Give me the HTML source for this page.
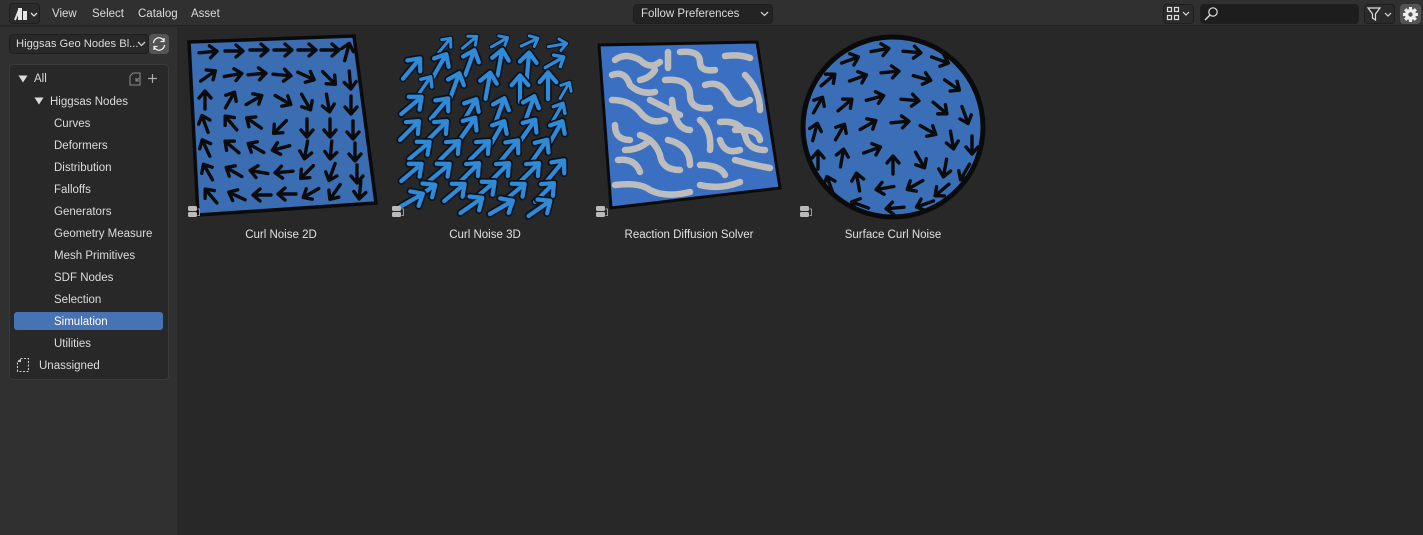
<!DOCTYPE html>
<html><head><meta charset="utf-8"><style>
*{margin:0;padding:0;box-sizing:border-box}
body{width:1423px;height:535px;background:#282828;font-family:"Liberation Sans","DejaVu Sans",sans-serif;font-size:11.5px;color:#d8d8d8;position:relative;overflow:hidden}
.hdr{position:absolute;left:0;top:0;width:1423px;height:26px;background:#303030;border-bottom:1px solid #232323}
.abs{position:absolute}
.btn{position:absolute;background:#282828;border:1px solid #1f1f1f;border-radius:4px}
.side{position:absolute;left:0;top:27px;width:177px;height:508px;background:#303030}
.panel{position:absolute;left:9px;top:64px;width:160px;height:316px;background:#282828;border:1px solid #3a3a3a;border-radius:4px}
.it{position:absolute;white-space:nowrap;color:#dcdcdc}
.sel{position:absolute;left:14px;top:312px;width:149px;height:18px;background:#4772b3;border-radius:3px}
.lbl{position:absolute;width:200px;text-align:center;color:#e0e0e0;top:229px}
</style></head><body>
<div class="hdr"></div>
<div class="btn" style="left:9px;top:3px;width:31px;height:21px;background:#2b2b2b"></div>
<svg class="abs" style="left:13px;top:6px" width="26" height="16"><path d="M2 14 L6 4 M6 14 V3 H8 V14 M11 14 V6 H13 V14" stroke="#e6e6e6" stroke-width="2" fill="none"/><path d="M18 7 l3 3 l3-3" stroke="#ddd" stroke-width="1.3" fill="none"/></svg>
<div class="it" style="left:52px;top:8px">View</div>
<div class="it" style="left:92px;top:8px">Select</div>
<div class="it" style="left:138px;top:8px">Catalog</div>
<div class="it" style="left:191px;top:8px">Asset</div>
<div class="btn" style="left:633px;top:4px;width:140px;height:20px;background:#232323"></div>
<div class="it" style="left:641px;top:8px">Follow Preferences</div>
<svg class="abs" style="left:760px;top:10px" width="10" height="8"><path d="M1 2 l3.5 3.5 l3.5-3.5" stroke="#ccc" stroke-width="1.3" fill="none"/></svg>
<div class="btn" style="left:1163px;top:4px;width:31px;height:20px;background:#2b2b2b"></div>
<svg class="abs" style="left:1166px;top:6px" width="28" height="16"><g fill="none" stroke="#ddd" stroke-width="1.2"><rect x="1.5" y="1.5" width="4" height="4"/><rect x="8.5" y="1.5" width="4" height="4"/><rect x="1.5" y="9.5" width="4" height="4"/><rect x="8.5" y="9.5" width="4" height="4"/><path d="M17 6 l3 3 l3-3"/></g></svg>
<div class="btn" style="left:1200px;top:4px;width:159px;height:20px;background:#1d1d1d"></div>
<svg class="abs" style="left:1203px;top:6px" width="18" height="16"><circle cx="10" cy="6" r="4.2" fill="none" stroke="#ddd" stroke-width="1.2"/><path d="M7 9 L2 14" stroke="#ddd" stroke-width="1.4"/></svg>
<div class="btn" style="left:1364px;top:4px;width:31px;height:20px;background:#2b2b2b"></div>
<svg class="abs" style="left:1366px;top:6px" width="28" height="16"><path d="M2 2 H14 L9.5 8 V14 L6.5 12 V8 Z" fill="none" stroke="#ddd" stroke-width="1.2"/><path d="M19 7 l3 3 l3-3" fill="none" stroke="#ddd" stroke-width="1.2"/></svg>
<div class="btn" style="left:1400px;top:4px;width:21px;height:20px;background:#545454;border-color:#545454"></div>
<svg class="abs" style="left:1402px;top:6px" width="17" height="17" viewBox="-8.5 -8.5 17 17"><g fill="#eee"><circle r="5.5"/><g id="t"><rect x="-1.6" y="-7.5" width="3.2" height="15"/></g><use href="#t" transform="rotate(45)"/><use href="#t" transform="rotate(90)"/><use href="#t" transform="rotate(135)"/></g><circle r="2.2" fill="#545454"/></svg>

<div class="side"></div>
<div class="btn" style="left:9px;top:34px;width:140px;height:20px;background:#282828"></div>
<div class="it" style="left:16px;top:38px;font-size:11.2px">Higgsas Geo Nodes Bl...</div>
<svg class="abs" style="left:137px;top:40px" width="10" height="8"><path d="M1 2 l3.5 3.5 l3.5-3.5" stroke="#ccc" stroke-width="1.3" fill="none"/></svg>
<div class="btn" style="left:149px;top:34px;width:20px;height:20px;background:#545454;border-color:#545454"></div>
<svg class="abs" style="left:151px;top:36px" width="16" height="16"><path d="M2.5 7 A5.5 5.5 0 0 1 13 5 M13.5 9 A5.5 5.5 0 0 1 3 11" fill="none" stroke="#eee" stroke-width="1.3"/><path d="M13 2 V5.5 H9.5 M3 14 V10.5 H6.5" fill="none" stroke="#eee" stroke-width="1.3"/></svg>
<div class="panel"></div>
<svg class="abs" style="left:18px;top:74px" width="10" height="10"><path d="M0.5 1.5 H9.5 L5 8.5Z" fill="#ddd"/></svg>
<div class="it" style="left:34px;top:73px">All</div>
<svg class="abs" style="left:128px;top:71px" width="32" height="16"><path d="M2 14 V5 L5 2 H12 V14 Z M8 7 V10 H11 M8 10 L11 7" fill="none" stroke="#888" stroke-width="1.1"/><path d="M20 7.5 H29 M24.5 3 V12" stroke="#aaa" stroke-width="1.2"/></svg>
<svg class="abs" style="left:34px;top:96px" width="10" height="10"><path d="M0.5 1.5 H9.5 L5 8.5Z" fill="#ddd"/></svg>
<div class="it" style="left:50px;top:96px">Higgsas Nodes</div>
<div class="it" style="left:54px;top:118px">Curves</div>
<div class="it" style="left:54px;top:140px">Deformers</div>
<div class="it" style="left:54px;top:162px">Distribution</div>
<div class="it" style="left:54px;top:184px">Falloffs</div>
<div class="it" style="left:54px;top:206px">Generators</div>
<div class="it" style="left:54px;top:228px">Geometry Measure</div>
<div class="it" style="left:54px;top:250px">Mesh Primitives</div>
<div class="it" style="left:54px;top:272px">SDF Nodes</div>
<div class="it" style="left:54px;top:294px">Selection</div>
<div class="sel"></div>
<div class="it" style="left:54px;top:316px;color:#fff">Simulation</div>
<div class="it" style="left:54px;top:338px">Utilities</div>
<svg class="abs" style="left:16px;top:357px" width="14" height="16"><path d="M1.5 14.5 V5 L5 1.5 H12.5 V14.5 Z" fill="none" stroke="#ccc" stroke-width="1.1" stroke-dasharray="2 1.5"/><path d="M1.5 5 L5 1.5 V5Z" fill="#ccc"/></svg>
<div class="it" style="left:39px;top:360px">Unassigned</div>

<svg class="abs" style="left:0;top:0" width="1423" height="535">
<defs>
<g id="a"><path d="M-9 0 H8 M2 -6 L9 0 L2 6" fill="none" stroke="#0b0b0b" stroke-width="3.4" stroke-linecap="round" stroke-linejoin="round"/></g>
<g id="b"><g transform="scale(1.4)"><path d="M-10 0 H8 M2 -6 L9 0 L2 6" fill="none" stroke="#071420" stroke-width="5.5" stroke-linecap="round" stroke-linejoin="round"/><path d="M-10 0 H8 M2 -6 L9 0 L2 6" fill="none" stroke="#2f8ad8" stroke-width="3" stroke-linecap="round" stroke-linejoin="round"/></g></g>
<g id="ic"><rect x="0" y="0" width="9" height="5" rx="1.5" fill="#bbb"/><rect x="0" y="6" width="9" height="5" rx="1.5" fill="#bbb"/><path d="M9.5 3 H11.5 V9.5 H9.5" fill="none" stroke="#999"/></g>
</defs>
<!-- Curl 2D -->
<polygon points="189,42 354,36 376,203 198,215" fill="#3b6db3" stroke="#0a0a0a" stroke-width="3.5"/>
<g>
<use href="#a" transform="translate(208,52) rotate(-5)"/><use href="#a" transform="translate(234,51) rotate(0)"/><use href="#a" transform="translate(259,50) rotate(0)"/><use href="#a" transform="translate(283,50) rotate(0)"/><use href="#a" transform="translate(307,50) rotate(0)"/><use href="#a" transform="translate(330,50) rotate(0)"/><use href="#a" transform="translate(347,52) rotate(-75)"/>
<use href="#a" transform="translate(208,76) rotate(-35)"/><use href="#a" transform="translate(233,75) rotate(-10)"/><use href="#a" transform="translate(257,74) rotate(-5)"/><use href="#a" transform="translate(282,75) rotate(5)"/><use href="#a" transform="translate(306,76) rotate(25)"/><use href="#a" transform="translate(329,78) rotate(45)"/><use href="#a" transform="translate(350,80) rotate(85)"/>
<use href="#a" transform="translate(205,100) rotate(-90)"/><use href="#a" transform="translate(230,100) rotate(-60)"/><use href="#a" transform="translate(254,100) rotate(-30)"/><use href="#a" transform="translate(283,100) rotate(30)"/><use href="#a" transform="translate(306,102) rotate(60)"/><use href="#a" transform="translate(328,103) rotate(80)"/><use href="#a" transform="translate(351,105) rotate(90)"/>
<use href="#a" transform="translate(205,124) rotate(-110)"/><use href="#a" transform="translate(231,123) rotate(-130)"/><use href="#a" transform="translate(254,123) rotate(-145)"/><use href="#a" transform="translate(280,127) rotate(135)"/><use href="#a" transform="translate(307,128) rotate(90)"/><use href="#a" transform="translate(330,128) rotate(90)"/><use href="#a" transform="translate(353,130) rotate(90)"/>
<use href="#a" transform="translate(206,148) rotate(-115)"/><use href="#a" transform="translate(232,147) rotate(-140)"/><use href="#a" transform="translate(256,148) rotate(-150)"/><use href="#a" transform="translate(281,148) rotate(165)"/><use href="#a" transform="translate(306,150) rotate(100)"/><use href="#a" transform="translate(331,150) rotate(95)"/><use href="#a" transform="translate(355,152) rotate(90)"/>
<use href="#a" transform="translate(208,172) rotate(-120)"/><use href="#a" transform="translate(234,172) rotate(-150)"/><use href="#a" transform="translate(259,172) rotate(-170)"/><use href="#a" transform="translate(284,172) rotate(175)"/><use href="#a" transform="translate(307,172) rotate(135)"/><use href="#a" transform="translate(332,172) rotate(110)"/><use href="#a" transform="translate(357,174) rotate(90)"/>
<use href="#a" transform="translate(211,196) rotate(-130)"/><use href="#a" transform="translate(237,196) rotate(-155)"/><use href="#a" transform="translate(262,195) rotate(180)"/><use href="#a" transform="translate(287,194) rotate(180)"/><use href="#a" transform="translate(311,193) rotate(150)"/><use href="#a" transform="translate(335,192) rotate(125)"/><use href="#a" transform="translate(360,190) rotate(95)"/>
</g>
<!-- Curl 3D -->
<g>
<use href="#b" transform="translate(445,45) rotate(-50) scale(.7)"/><use href="#b" transform="translate(470,42) rotate(-40) scale(.7)"/><use href="#b" transform="translate(500,42) rotate(-30) scale(.7)"/><use href="#b" transform="translate(530,42) rotate(-25) scale(.7)"/><use href="#b" transform="translate(558,45) rotate(-10) scale(.7)"/>
<use href="#b" transform="translate(412,68) rotate(-50)"/><use href="#b" transform="translate(440,65) rotate(-60)"/><use href="#b" transform="translate(470,62) rotate(-70)"/><use href="#b" transform="translate(500,62) rotate(-80)"/><use href="#b" transform="translate(528,65) rotate(-85)"/><use href="#b" transform="translate(555,62) rotate(-30) scale(.8)"/>
<use href="#b" transform="translate(425,85) rotate(-55) scale(.8)"/><use href="#b" transform="translate(455,85) rotate(-70)"/><use href="#b" transform="translate(488,85) rotate(-80)"/><use href="#b" transform="translate(520,88) rotate(-90)"/><use href="#b" transform="translate(548,85) rotate(-90)"/><use href="#b" transform="translate(565,90) rotate(-60) scale(.7)"/>
<use href="#b" transform="translate(412,105) rotate(-40)"/><use href="#b" transform="translate(440,108) rotate(-50)"/><use href="#b" transform="translate(470,110) rotate(-60)"/><use href="#b" transform="translate(500,110) rotate(-70)"/><use href="#b" transform="translate(530,108) rotate(-70)"/><use href="#b" transform="translate(558,112) rotate(-60) scale(.8)"/>
<use href="#b" transform="translate(410,130) rotate(-45)"/><use href="#b" transform="translate(438,130) rotate(-45)"/><use href="#b" transform="translate(468,128) rotate(-55)"/><use href="#b" transform="translate(498,132) rotate(-60)"/><use href="#b" transform="translate(528,130) rotate(-55)"/><use href="#b" transform="translate(556,132) rotate(-60)"/>
<use href="#b" transform="translate(420,150) rotate(-40)"/><use href="#b" transform="translate(450,150) rotate(-45)"/><use href="#b" transform="translate(480,150) rotate(-45)"/><use href="#b" transform="translate(510,150) rotate(-50)"/><use href="#b" transform="translate(540,150) rotate(-55)"/>
<use href="#b" transform="translate(412,172) rotate(-40)"/><use href="#b" transform="translate(440,172) rotate(-40)"/><use href="#b" transform="translate(470,172) rotate(-45)"/><use href="#b" transform="translate(500,172) rotate(-45)"/><use href="#b" transform="translate(530,172) rotate(-45)"/><use href="#b" transform="translate(556,170) rotate(-50)"/>
<use href="#b" transform="translate(425,192) rotate(-35)"/><use href="#b" transform="translate(455,192) rotate(-40)"/><use href="#b" transform="translate(485,190) rotate(-40)"/><use href="#b" transform="translate(515,192) rotate(-40)"/><use href="#b" transform="translate(545,192) rotate(-45)"/>
<use href="#b" transform="translate(412,200) rotate(-30)"/><use href="#b" transform="translate(472,205) rotate(-35)"/><use href="#b" transform="translate(502,207) rotate(-30)"/><use href="#b" transform="translate(540,208) rotate(-35)"/>
</g>
<!-- Reaction diffusion -->
<polygon points="599,45 757,42 780,188 611,208" fill="#3a6fc2" stroke="#0a0a0a" stroke-width="3"/>
<g fill="none" stroke="#bdbdbd" stroke-width="6.5" stroke-linecap="round" stroke-linejoin="round">
<path d="M615 60 Q625 52 640 60 Q650 70 660 62 M668 52 V68 M680 52 Q700 50 700 62 Q700 72 715 70 M725 56 Q740 54 750 58"/>
<path d="M612 75 Q625 70 630 85 Q640 95 655 92 M665 80 Q690 78 690 95 Q690 110 710 108 M705 85 Q720 80 728 95 Q735 110 750 100"/>
<path d="M612 100 Q630 100 640 112 Q650 125 665 120 M672 100 Q675 130 690 130 M700 120 Q712 130 710 150 M720 122 Q740 120 745 135 Q748 150 765 150"/>
<path d="M615 125 Q615 140 630 140 M640 135 Q655 140 660 155 Q662 170 680 170 M668 140 Q690 145 690 165 M700 165 Q720 165 725 175 M735 160 Q752 165 770 168"/>
<path d="M618 160 Q635 158 640 172 M615 185 Q640 182 650 190 Q665 198 690 192 M700 185 Q720 190 740 182 M745 75 Q760 90 760 110 M735 130 Q758 128 760 140"/>
<path d="M640 80 Q650 78 655 70 M720 140 Q725 155 740 150 M625 150 Q640 150 650 140 M680 115 Q660 105 650 100"/>
</g>
<!-- Sphere -->
<circle cx="893" cy="127" r="90" fill="#3a6fb8" stroke="#0a0a0a" stroke-width="5"/>
<g>
<use href="#a" transform="translate(850,60) rotate(-20)"/><use href="#a" transform="translate(880,50) rotate(-10)"/><use href="#a" transform="translate(912,52) rotate(5)"/><use href="#a" transform="translate(940,60) rotate(20)"/>
<use href="#a" transform="translate(828,80) rotate(-40)"/><use href="#a" transform="translate(858,78) rotate(-20)"/><use href="#a" transform="translate(890,72) rotate(-5)"/><use href="#a" transform="translate(922,78) rotate(15)"/><use href="#a" transform="translate(952,85) rotate(35)"/>
<use href="#a" transform="translate(818,105) rotate(-60)"/><use href="#a" transform="translate(845,105) rotate(-40)"/><use href="#a" transform="translate(875,98) rotate(-15)"/><use href="#a" transform="translate(910,100) rotate(5)"/><use href="#a" transform="translate(940,108) rotate(40)"/><use href="#a" transform="translate(965,115) rotate(70)"/>
<use href="#a" transform="translate(815,132) rotate(-75)"/><use href="#a" transform="translate(840,132) rotate(-60)"/><use href="#a" transform="translate(868,125) rotate(-30)"/><use href="#a" transform="translate(900,122) rotate(-5)"/><use href="#a" transform="translate(928,130) rotate(30)"/><use href="#a" transform="translate(952,140) rotate(80)"/><use href="#a" transform="translate(972,145) rotate(90)"/>
<use href="#a" transform="translate(818,160) rotate(-90)"/><use href="#a" transform="translate(842,158) rotate(-80)"/><use href="#a" transform="translate(872,150) rotate(-20)"/><use href="#a" transform="translate(893,165) rotate(-90)"/><use href="#a" transform="translate(920,160) rotate(60)"/><use href="#a" transform="translate(945,168) rotate(100)"/><use href="#a" transform="translate(965,172) rotate(120)"/>
<use href="#a" transform="translate(830,185) rotate(-110)"/><use href="#a" transform="translate(858,182) rotate(-100)"/><use href="#a" transform="translate(885,188) rotate(170)"/><use href="#a" transform="translate(915,185) rotate(150)"/><use href="#a" transform="translate(942,190) rotate(140)"/>
<use href="#a" transform="translate(860,205) rotate(-160)"/><use href="#a" transform="translate(895,208) rotate(175)"/><use href="#a" transform="translate(925,204) rotate(160)"/>
</g>
<use href="#ic" transform="translate(188,206)"/><use href="#ic" transform="translate(392,206)"/><use href="#ic" transform="translate(596,206)"/><use href="#ic" transform="translate(800,206)"/>
</svg>
<div class="lbl" style="left:181px">Curl Noise 2D</div>
<div class="lbl" style="left:385px">Curl Noise 3D</div>
<div class="lbl" style="left:589px">Reaction Diffusion Solver</div>
<div class="lbl" style="left:793px">Surface Curl Noise</div>
</body></html>
